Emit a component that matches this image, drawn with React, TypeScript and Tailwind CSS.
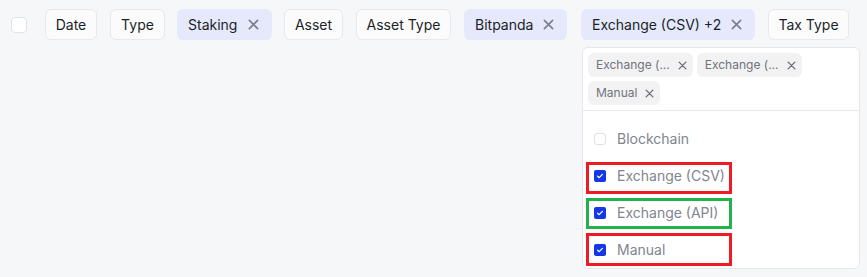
import React from "react";

const XIcon = ({ size = 11, className = "" }: { size?: number; className?: string }) => (
  <svg width={size} height={size} viewBox="0 0 12 12" className={className}>
    <path d="M1.5 1.5 L10.5 10.5 M10.5 1.5 L1.5 10.5" stroke="currentColor" strokeWidth="1.8" strokeLinecap="round" />
  </svg>
);

const filters = [
  { label: "Date", active: false, cls: "w-[52px]" },
  { label: "Type", active: false, cls: "w-[55px] ml-px" },
  { label: "Staking", active: true, cls: "w-[95px]" },
  { label: "Asset", active: false, cls: "w-[59px]" },
  { label: "Asset Type", active: false, cls: "w-[95px] ml-px" },
  { label: "Bitpanda", active: true, cls: "w-[103px] ml-px" },
  { label: "Exchange (CSV) +2", active: true, cls: "w-[174px] ml-[2px]" },
  { label: "Tax Type", active: false, cls: "w-[81px] ml-px" },
];

const chips = ["Exchange (...", "Exchange (...", "Manual"];

const options = [
  { label: "Blockchain", checked: false },
  { label: "Exchange (CSV)", checked: true },
  { label: "Exchange (API)", checked: true },
  { label: "Manual", checked: true },
];

const App: React.FC = () => {
  return (
    <div className="relative h-[277px] w-[867px] bg-[#f6f7f9] font-['Inter','Liberation_Sans',sans-serif] overflow-hidden">
      {/* filter bar */}
      <div className="flex items-center gap-3 pl-[11px] pt-[9px]">
        <div className="mr-[6px] h-4 w-4 rounded-[4px] border border-[#e1e3e8] bg-white" />
        {filters.map((f) =>
          f.active ? (
            <div
              key={f.label}
              className={`flex h-[31px] shrink-0 items-center justify-between rounded-md bg-[#e5e9fb] pl-[11px] pr-[11px] text-sm text-[#1b1f2a] ${f.cls}`}
            >
              <span className="whitespace-nowrap">{f.label}</span>
              <span className="flex h-4 w-4 items-center justify-center text-[#7a7f89]">
                <XIcon />
              </span>
            </div>
          ) : (
            <div
              key={f.label}
              className={`flex h-[31px] shrink-0 items-center justify-center rounded-md border border-[#e7e8ec] bg-[#fbfbfc] text-sm text-[#1b1f2a] whitespace-nowrap ${f.cls}`}
            >
              {f.label}
            </div>
          )
        )}
      </div>

      {/* dropdown */}
      <div className="absolute left-[582px] top-[47px] w-[278px] rounded-md border border-[#e6e7eb] bg-white">
        <div className="flex flex-wrap gap-1 p-[5px]">
          {chips.map((c, i) => (
            <div
              key={i}
              className="flex h-6 items-center gap-[8px] rounded-md bg-[#f2f2f3] pl-2 pr-[6px] text-xs text-[#70747c]"
            >
              <span className="whitespace-nowrap">{c}</span>
              <XIcon size={9} className="text-[#6b6f77]" />
            </div>
          ))}
        </div>
        <div className="h-px bg-[#e8e9ec]" />
        <div className="pt-[9px]">
          {options.map((o) => (
            <div key={o.label} className="flex h-[37px] items-center gap-[11px] pl-[11px] text-sm text-[#80858f]">
              {o.checked ? (
                <div className="flex h-3 w-3 items-center justify-center rounded-[2px] bg-[#1438e6]">
                  <svg width="8" height="8" viewBox="0 0 8 8">
                    <path d="M1.6 4.2 L3.2 5.7 L6.4 2.4" stroke="white" strokeWidth="1.2" fill="none" strokeLinecap="round" strokeLinejoin="round" />
                  </svg>
                </div>
              ) : (
                <div className="h-3 w-3 rounded-[3px] border border-[#dfe1e6] bg-white" />
              )}
              <span>{o.label}</span>
            </div>
          ))}
        </div>
        {/* annotation boxes */}
        <div className="pointer-events-none absolute left-[3px] top-[114px] h-[32px] w-[146px] border-[3px] border-[#ed1c24]" />
        <div className="pointer-events-none absolute left-[3px] top-[150px] h-[31px] w-[146px] border-[3px] border-[#22b14c]" />
        <div className="pointer-events-none absolute left-[3px] top-[185px] h-[33px] w-[146px] border-[3px] border-[#ed1c24]" />
      </div>
    </div>
  );
};

export default App;
